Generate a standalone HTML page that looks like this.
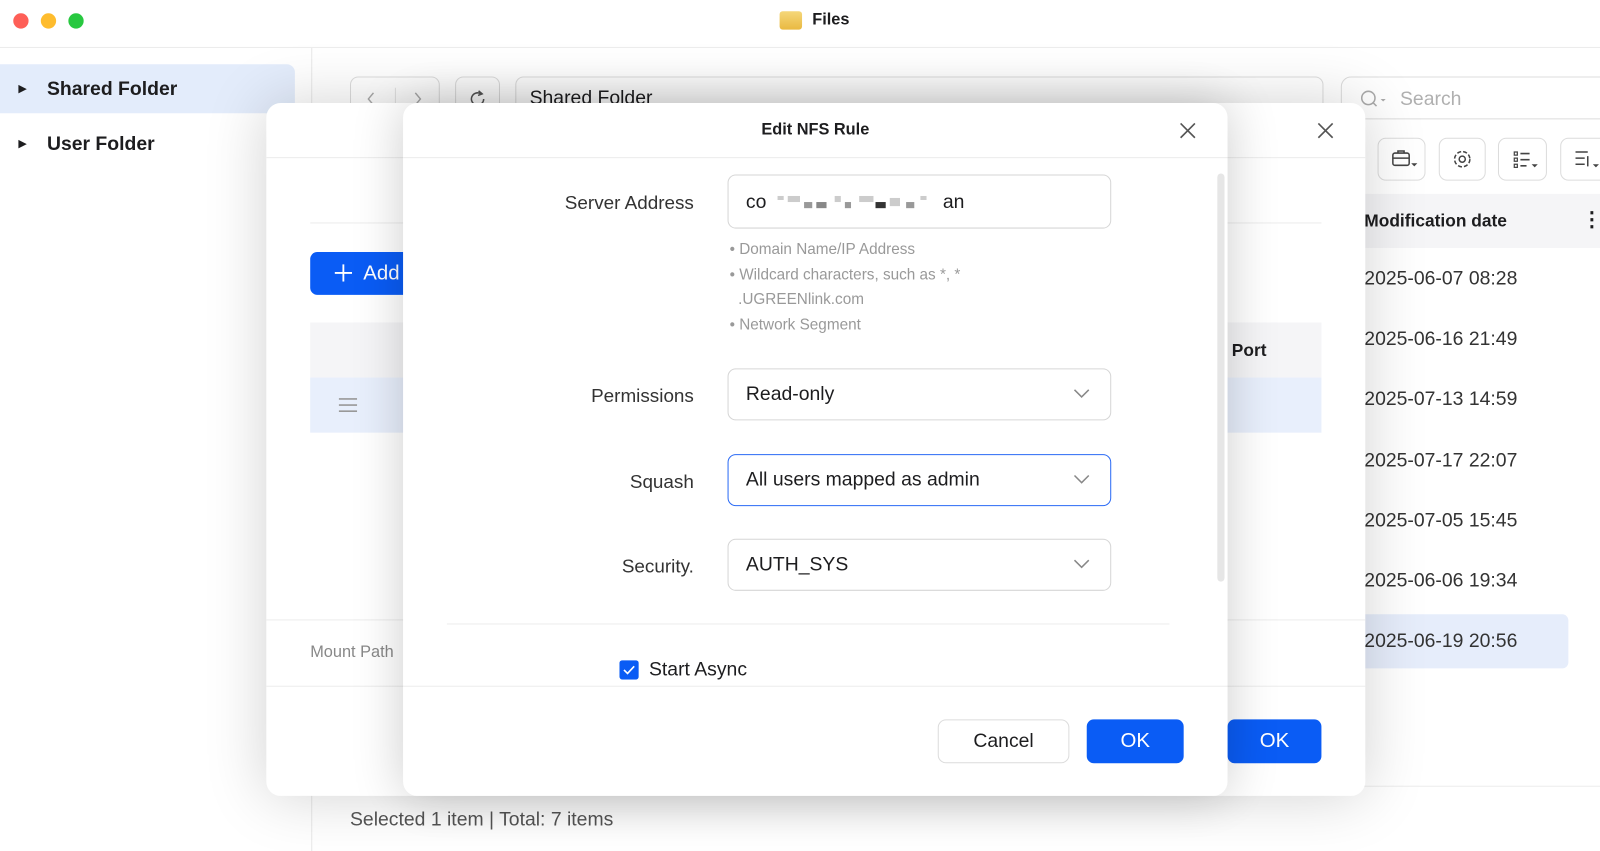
<!DOCTYPE html>
<html><head><meta charset="utf-8"><style>
*{box-sizing:border-box;margin:0;padding:0}
body{width:1600px;height:834px;overflow:hidden;background:#fff;font-family:"Liberation Sans",Arial,sans-serif;color:#1d1d1f;position:relative}
#w{position:absolute;left:0;top:0;width:1568px;height:818px;transform:scale(1.020408);transform-origin:0 0}
.a{position:absolute}
.t{position:absolute;white-space:nowrap}
.btn{position:absolute;border:1px solid #dcdcdc;border-radius:8px;background:#fff}
.blue{background:#0a5cf5;color:#fff;border-radius:7px;text-align:center}
.sel{position:absolute;border:1px solid #d6d6d6;border-radius:8px;background:#fff;font-size:19px}
.sel span{position:absolute;left:17px;top:14px}
.chev{position:absolute;right:20px;top:19px}
.lb{position:absolute;white-space:nowrap;right:888px;font-size:18.5px;color:#333}
</style></head><body><div id="w">
<div class="a" style="left:13px;top:13px;width:15px;height:15px;border-radius:50%;background:#fe5f57"></div>
<div class="a" style="left:40px;top:13px;width:15px;height:15px;border-radius:50%;background:#febc2e"></div>
<div class="a" style="left:67px;top:13px;width:15px;height:15px;border-radius:50%;background:#28c840"></div>
<div class="a" style="left:764px;top:11px;width:22px;height:18px;border-radius:3px;background:linear-gradient(#f5d77a,#e9b941)"></div>
<div class="t" style="left:796px;top:11px;font-size:16px;font-weight:bold">Files</div>
<div class="a" style="left:0;top:46px;width:1600px;height:1px;background:#ececec"></div>
<div class="a" style="left:305px;top:47px;width:1px;height:787px;background:#e8e8e8"></div>
<div class="a" style="left:0;top:63px;width:289px;height:48px;background:#e3ecfb;border-radius:0 8px 8px 0"></div>
<div class="t" style="left:18px;top:80px;font-size:11px">&#9654;</div>
<div class="t" style="left:46px;top:77px;font-size:19px;font-weight:bold">Shared Folder</div>
<div class="t" style="left:18px;top:134px;font-size:11px">&#9654;</div>
<div class="t" style="left:46px;top:131px;font-size:19px;font-weight:bold">User Folder</div>
<div class="btn" style="left:343px;top:75px;width:88px;height:44px"></div>
<div class="a" style="left:387px;top:86px;width:1px;height:22px;background:#e4e4e4"></div>
<svg class="a" style="left:358px;top:90px" width="60" height="14"><path d="M8 1L3 7l5 6M49 1l5 6-5 6" fill="none" stroke="#aaa" stroke-width="1.4"/></svg>
<div class="btn" style="left:446px;top:75px;width:44px;height:44px"></div>
<svg class="a" style="left:459px;top:88px" width="18" height="18"><path d="M15 9A6 6 0 1 1 12 3.8" fill="none" stroke="#555" stroke-width="1.5"/><path d="M10 1l3.5 3-4 1.5" fill="none" stroke="#555" stroke-width="1.5"/></svg>
<div class="btn" style="left:505px;top:75px;width:792px;height:44px"></div>
<div class="t" style="left:519px;top:86px;font-size:19px">Shared Folder</div>
<div class="btn" style="left:1314px;top:75px;width:280px;height:42px;border-radius:10px"></div>
<svg class="a" style="left:1332px;top:88px" width="30" height="20"><circle cx="9" cy="8" r="6.5" fill="none" stroke="#aaa" stroke-width="1.5"/><path d="M13.5 12.5L17 16" stroke="#aaa" stroke-width="1.5"/><path d="M21 9l2.5 2.5L26 9z" fill="#aaa"/></svg>
<div class="t" style="left:1372px;top:87px;font-size:19px;color:#b0b0b0">Search</div>
<div class="btn" style="left:1350px;top:135px;width:47px;height:42px"></div>
<div class="btn" style="left:1410px;top:135px;width:46px;height:42px"></div>
<div class="btn" style="left:1468px;top:135px;width:48px;height:42px"></div>
<div class="btn" style="left:1529px;top:135px;width:48px;height:42px"></div>
<svg class="a" style="left:1364px;top:146px" width="30" height="22"><rect x="1" y="4" width="16" height="12" rx="2" fill="none" stroke="#444" stroke-width="1.5"/><path d="M6 4V2h6v2M1 9h16" stroke="#444" stroke-width="1.5" fill="none"/><path d="M19 14h6l-3 3z" fill="#444"/></svg>
<svg class="a" style="left:1422px;top:145px" width="22" height="22"><circle cx="11" cy="11" r="3" fill="none" stroke="#444" stroke-width="1.5"/><circle cx="11" cy="11" r="7.5" fill="none" stroke="#444" stroke-width="1.5" stroke-dasharray="4 2"/></svg>
<svg class="a" style="left:1482px;top:146px" width="30" height="22"><path d="M2 3h3v3H2zM2 9h3v3H2zM2 15h3v3H2z" fill="none" stroke="#444" stroke-width="1.2"/><path d="M8 4.5h9M8 10.5h9M8 16.5h6" stroke="#444" stroke-width="1.5"/><path d="M19 15h6l-3 3z" fill="#444"/></svg>
<svg class="a" style="left:1542px;top:146px" width="30" height="22"><path d="M2 3h12M2 9h9M2 15h9M14 7v10" stroke="#444" stroke-width="1.5"/><path d="M19 15h6l-3 3z" fill="#444"/></svg>
<div class="a" style="left:306px;top:190px;width:1294px;height:53px;background:#f5f5f7"></div>
<div class="t" style="left:1337px;top:207px;font-size:17px;font-weight:bold">Modification date</div>
<div class="t" style="left:1550px;top:203px;font-size:20px;font-weight:bold">&#8942;</div>
<div class="a" style="left:306px;top:602px;width:1231px;height:53px;background:#e6edfb;border-radius:0 6px 6px 0"></div>
<div class="t" style="left:1337px;top:263px;font-size:19px;color:#333">2025-06-07 08:28</div>
<div class="t" style="left:1337px;top:322px;font-size:19px;color:#333">2025-06-16 21:49</div>
<div class="t" style="left:1337px;top:381px;font-size:19px;color:#333">2025-07-13 14:59</div>
<div class="t" style="left:1337px;top:441px;font-size:19px;color:#333">2025-07-17 22:07</div>
<div class="t" style="left:1337px;top:500px;font-size:19px;color:#333">2025-07-05 15:45</div>
<div class="t" style="left:1337px;top:559px;font-size:19px;color:#333">2025-06-06 19:34</div>
<div class="t" style="left:1337px;top:618px;font-size:19px;color:#333">2025-06-19 20:56</div>
<div class="a" style="left:306px;top:770px;width:1294px;height:1px;background:#ececec"></div>
<div class="t" style="left:343px;top:793px;font-size:19px;color:#555">Selected 1 item | Total: 7 items</div>
<div class="a" style="left:261px;top:101px;width:1077px;height:679px;background:#fff;border-radius:14px;box-shadow:0 0 60px rgba(0,0,0,0.18)"></div>
<div class="a" style="left:261px;top:154px;width:1077px;height:1px;background:#ececec"></div>
<svg class="a" style="left:1290px;top:119px" width="18" height="18"><path d="M2 2l14 14M16 2L2 16" stroke="#555" stroke-width="1.6"/></svg>
<div class="a" style="left:304px;top:218px;width:991px;height:1px;background:#ececec"></div>
<div class="a blue" style="left:304px;top:247px;width:120px;height:42px"></div>
<svg class="a" style="left:328px;top:259px" width="17" height="17"><path d="M8.5 0v17M0 8.5h17" stroke="#fff" stroke-width="1.8"/></svg>
<div class="t" style="left:356px;top:257px;font-size:20px;color:#fff">Add</div>
<div class="a" style="left:304px;top:316px;width:991px;height:54px;background:#f5f5f7"></div>
<div class="t" style="left:1198px;top:334px;font-size:17px;font-weight:bold"><span style="color:#bbb;font-weight:normal">|</span> Port</div>
<div class="a" style="left:304px;top:370px;width:991px;height:54px;background:#e8effc"></div>
<svg class="a" style="left:332px;top:390px" width="18" height="14"><path d="M0 1h18M0 7h18M0 13h18" stroke="#999" stroke-width="1.6"/></svg>
<div class="a" style="left:261px;top:607px;width:1077px;height:1px;background:#ececec"></div>
<div class="t" style="left:304px;top:631px;font-size:16px;color:#888">Mount Path</div>
<div class="a" style="left:261px;top:672px;width:1077px;height:1px;background:#ececec"></div>
<div class="a blue" style="left:1203px;top:705px;width:92px;height:43px;font-size:20px;line-height:43px">OK</div>
<div class="a" style="left:395px;top:101px;width:808px;height:679px;background:#fff;border-radius:14px;box-shadow:0 0 50px rgba(0,0,0,0.2)"></div>
<div class="t" style="left:395px;width:808px;text-align:center;top:119px;font-size:16px;font-weight:bold">Edit NFS Rule</div>
<svg class="a" style="left:1155px;top:119px" width="18" height="18"><path d="M2 2l14 14M16 2L2 16" stroke="#555" stroke-width="1.6"/></svg>
<div class="a" style="left:395px;top:154px;width:808px;height:1px;background:#ececec"></div>
<div class="a" style="left:1193px;top:170px;width:7px;height:400px;background:#e6e6e6;border-radius:4px"></div>
<div class="lb" style="top:188px">Server Address</div>
<div class="sel" style="left:713px;top:171px;width:376px;height:53px"><span style="top:16px">co</span>
<svg class="a" style="left:44px;top:20px" width="190" height="14"><g fill="#ccc"><rect x="4" y="0" width="6" height="4"/><rect x="14" y="0" width="12" height="6"/><rect x="30" y="6" width="8" height="6" fill="#999"/><rect x="42" y="6" width="10" height="6" fill="#888"/><rect x="60" y="0" width="6" height="6"/><rect x="70" y="6" width="6" height="6" fill="#999"/><rect x="84" y="0" width="14" height="6"/><rect x="100" y="6" width="10" height="6" fill="#333"/><rect x="114" y="2" width="10" height="8"/><rect x="130" y="6" width="8" height="6" fill="#999"/><rect x="144" y="0" width="6" height="4"/></g></svg>
<span style="left:210px;top:16px">an</span></div>
<div class="t" style="left:715px;top:233px;font-size:15px;color:#999;line-height:24.5px">• Domain Name/IP Address<br>• Wildcard characters, such as *, *<br>&nbsp;&nbsp;.UGREENlink.com<br>• Network Segment</div>
<div class="lb" style="top:377px">Permissions</div>
<div class="sel" style="left:713px;top:361px;width:376px;height:51px"><span>Read-only</span><svg class="chev" width="16" height="10"><path d="M1 1l7 7 7-7" fill="none" stroke="#888" stroke-width="1.5"/></svg></div>
<div class="lb" style="top:461px">Squash</div>
<div class="sel" style="left:713px;top:445px;width:376px;height:51px;border-color:#2a6af5"><span>All users mapped as admin</span><svg class="chev" width="16" height="10"><path d="M1 1l7 7 7-7" fill="none" stroke="#888" stroke-width="1.5"/></svg></div>
<div class="lb" style="top:544px">Security.</div>
<div class="sel" style="left:713px;top:528px;width:376px;height:51px"><span>AUTH_SYS</span><svg class="chev" width="16" height="10"><path d="M1 1l7 7 7-7" fill="none" stroke="#888" stroke-width="1.5"/></svg></div>
<div class="a" style="left:438px;top:611px;width:708px;height:1px;background:#ececec"></div>
<svg class="a" style="left:607px;top:647px" width="19" height="19"><rect width="19" height="19" rx="3" fill="#0a5cf5"/><path d="M4.5 9.5l3.5 3.5 6.5-7" fill="none" stroke="#fff" stroke-width="1.6"/></svg>
<div class="t" style="left:636px;top:646px;font-size:19px">Start Async</div>
<div class="a" style="left:395px;top:672px;width:808px;height:1px;background:#ececec"></div>
<div class="btn" style="left:919px;top:705px;width:129px;height:43px;text-align:center;font-size:19px;line-height:41px">Cancel</div>
<div class="a blue" style="left:1065px;top:705px;width:95px;height:43px;font-size:20px;line-height:43px">OK</div>
</div></body></html>
